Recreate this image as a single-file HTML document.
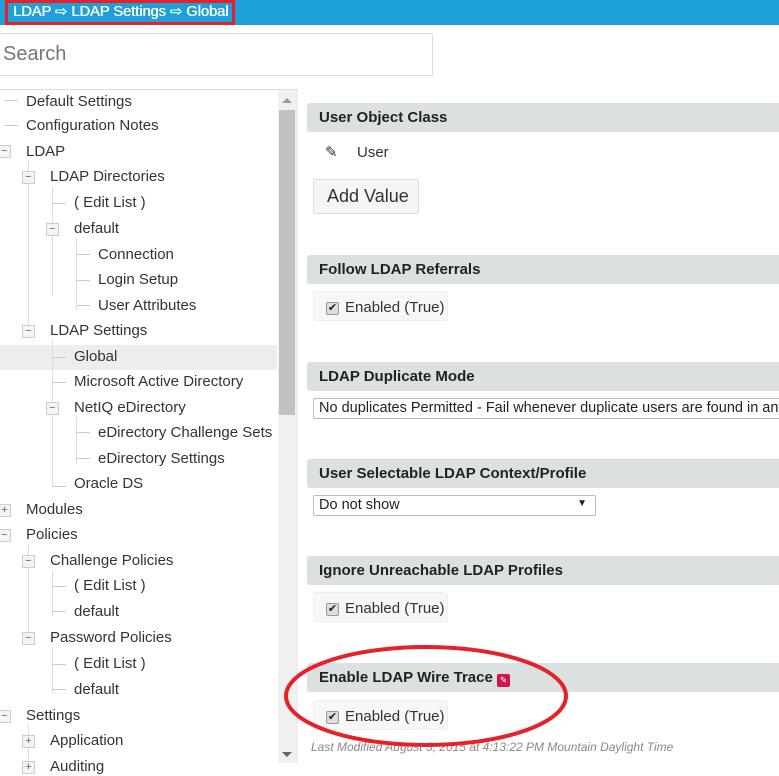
<!DOCTYPE html>
<html><head><meta charset="utf-8"><style>
*{margin:0;padding:0;box-sizing:border-box}
body{width:779px;height:763px;overflow:hidden;background:#fff;font-family:"Liberation Sans",Arial,sans-serif;color:#333;position:relative}
.a{position:absolute}
.t{position:absolute;font-size:15px;color:#333;white-space:nowrap;line-height:18px;margin-top:1px}
.tg{position:absolute;width:13px;height:13px;border:1px solid #ccc;background:#f4f4f4;font-size:11px;line-height:10px;text-align:center;color:#666}
.vl{position:absolute;border-left:1px solid #ddd}
.hd{position:absolute;left:307px;width:472px;height:29px;background:#dae1e0;border-radius:3px 0 0 3px;font-weight:bold;font-size:15px;color:#222;padding:6px 0 0 12px;line-height:18px}
.cb{position:absolute;left:313px;width:135px;height:30px;background:#f7f7f7;border:1px solid #eee;border-radius:3px;font-size:15px;color:#333;padding:7px 0 0 12px;line-height:18px}
.cb i{display:inline-block;width:13px;height:13px;border:1px solid #999;border-radius:2px;background:#ddd;margin-right:6px;vertical-align:1px;font-style:normal;font-size:11px;line-height:11px;text-align:center;color:#222}
</style></head><body>
<div class="a" style="left:0;top:0;width:779px;height:25px;background:#1d9fd8"></div>
<div class="a" style="left:5px;top:0;width:230px;height:25px;border:3px solid #e8202a;background:#1d9fd8"></div>
<div class="a" style="left:13px;top:3px;font-size:14.6px;color:#fff;white-space:nowrap;text-shadow:0.5px 0 0 #fff">LDAP ⇨ LDAP Settings ⇨ Global</div>
<div class="a" style="left:-2px;top:33px;width:435px;height:43px;border:1px solid #ddd;border-radius:2px"></div>
<div class="a" style="left:3px;top:43px;font-size:20px;color:#777">Search</div>
<div class="a" style="left:0;top:89px;width:298px;height:674px;border-top:1px solid #ddd"></div>
<div class="a" style="left:278px;top:90px;width:18px;height:673px;background:#f0f0f0"></div>
<div class="a" style="left:279px;top:110px;width:16px;height:305px;background:#c1c1c1"></div>
<div class="a" style="left:282px;top:98px;border:5px solid transparent;border-bottom:5px solid #999;border-top:0"></div>
<div class="a" style="left:282px;top:752px;border:5px solid transparent;border-top:5px solid #666;border-bottom:0"></div>
<div class="a" style="left:296px;top:90px;width:2px;height:673px;background:#eee"></div>
<div class="a" style="left:0;top:345px;width:277px;height:25px;background:#eceeee"></div>

<div class="vl" style="left:28px;top:160px;height:175px"></div>
<div class="vl" style="left:52px;top:186px;height:110px"></div>
<div class="vl" style="left:76px;top:238px;height:72px"></div>
<div class="vl" style="left:52px;top:340px;height:147px"></div>
<div class="vl" style="left:76px;top:417px;height:46px"></div>
<div class="vl" style="left:28px;top:544px;height:98px"></div>
<div class="vl" style="left:52px;top:570px;height:46px"></div>
<div class="vl" style="left:52px;top:647px;height:46px"></div>
<div class="vl" style="left:28px;top:725px;height:40px"></div>

<div class="a" style="left:4px;top:100px;width:14px;border-top:1px solid #ccc"></div>
<div class="t" style="left:26px;top:92px">Default Settings</div>
<div class="a" style="left:4px;top:125px;width:14px;border-top:1px solid #ccc"></div>
<div class="t" style="left:26px;top:116px">Configuration Notes</div>
<div class="tg" style="left:-2px;top:145px">−</div><div class="t" style="left:26px;top:142px">LDAP</div>
<div class="tg" style="left:22px;top:171px">−</div><div class="t" style="left:50px;top:167px">LDAP Directories</div>
<div class="a" style="left:52px;top:203px;width:14px;border-top:1px solid #ccc"></div><div class="t" style="left:74px;top:193px">( Edit List )</div>
<div class="tg" style="left:46px;top:223px">−</div><div class="t" style="left:74px;top:219px">default</div>
<div class="a" style="left:76px;top:254px;width:14px;border-top:1px solid #ccc"></div><div class="t" style="left:98px;top:245px">Connection</div>
<div class="a" style="left:76px;top:280px;width:14px;border-top:1px solid #ccc"></div><div class="t" style="left:98px;top:270px">Login Setup</div>
<div class="a" style="left:76px;top:305px;width:14px;border-top:1px solid #ccc"></div><div class="t" style="left:98px;top:296px">User Attributes</div>
<div class="tg" style="left:22px;top:325px">−</div><div class="t" style="left:50px;top:321px">LDAP Settings</div>
<div class="a" style="left:52px;top:357px;width:14px;border-top:1px solid #ccc"></div><div class="t" style="left:74px;top:347px">Global</div>
<div class="a" style="left:52px;top:382px;width:14px;border-top:1px solid #ccc"></div><div class="t" style="left:74px;top:372px">Microsoft Active Directory</div>
<div class="tg" style="left:46px;top:402px">−</div><div class="t" style="left:74px;top:398px">NetIQ eDirectory</div>
<div class="a" style="left:76px;top:432px;width:14px;border-top:1px solid #ccc"></div><div class="t" style="left:98px;top:423px">eDirectory Challenge Sets</div>
<div class="a" style="left:76px;top:458px;width:14px;border-top:1px solid #ccc"></div><div class="t" style="left:98px;top:449px">eDirectory Settings</div>
<div class="a" style="left:52px;top:486px;width:14px;border-top:1px solid #ccc"></div><div class="t" style="left:74px;top:474px">Oracle DS</div>
<div class="tg" style="left:-2px;top:504px">+</div><div class="t" style="left:26px;top:500px">Modules</div>
<div class="tg" style="left:-2px;top:529px">−</div><div class="t" style="left:26px;top:525px">Policies</div>
<div class="tg" style="left:22px;top:555px">−</div><div class="t" style="left:50px;top:551px">Challenge Policies</div>
<div class="a" style="left:52px;top:586px;width:14px;border-top:1px solid #ccc"></div><div class="t" style="left:74px;top:576px">( Edit List )</div>
<div class="a" style="left:52px;top:611px;width:14px;border-top:1px solid #ccc"></div><div class="t" style="left:74px;top:602px">default</div>
<div class="tg" style="left:22px;top:632px">−</div><div class="t" style="left:50px;top:628px">Password Policies</div>
<div class="a" style="left:52px;top:664px;width:14px;border-top:1px solid #ccc"></div><div class="t" style="left:74px;top:654px">( Edit List )</div>
<div class="a" style="left:52px;top:689px;width:14px;border-top:1px solid #ccc"></div><div class="t" style="left:74px;top:680px">default</div>
<div class="tg" style="left:-2px;top:710px">−</div><div class="t" style="left:26px;top:706px">Settings</div>
<div class="tg" style="left:22px;top:735px">+</div><div class="t" style="left:50px;top:731px">Application</div>
<div class="tg" style="left:22px;top:761px">+</div><div class="t" style="left:50px;top:757px">Auditing</div>

<div class="hd" style="top:103px">User Object Class</div>
<div class="a" style="left:325px;top:143px;font-size:15px;color:#333">✎</div>
<div class="a" style="left:357px;top:144px;font-size:15px;color:#333">User</div>
<div class="a" style="left:313px;top:179px;width:106px;height:35px;background:#f5f5f5;border:1px solid #ddd;border-radius:3px;font-size:18px;color:#333;padding:6px 0 0 13px">Add Value</div>
<div class="hd" style="top:255px">Follow LDAP Referrals</div>
<div class="cb" style="top:291px"><i>✔</i>Enabled (True)</div>
<div class="hd" style="top:362px">LDAP Duplicate Mode</div>
<div class="a" style="left:313px;top:398px;width:470px;height:21px;border:1px solid #bbb;border-radius:2px;background:#fff;font-size:14.5px;padding:1px 0 0 5px;white-space:nowrap;overflow:hidden;color:#222">No duplicates Permitted - Fail whenever duplicate users are found in any</div>
<div class="hd" style="top:459px">User Selectable LDAP Context/Profile</div>
<div class="a" style="left:313px;top:495px;width:283px;height:21px;border:1px solid #bbb;border-radius:2px;background:#fff;font-size:14.5px;padding:1px 0 0 5px;color:#222">Do not show<span style="position:absolute;right:8px;top:2px;font-size:10px">▼</span></div>
<div class="hd" style="top:556px">Ignore Unreachable LDAP Profiles</div>
<div class="cb" style="top:592px"><i>✔</i>Enabled (True)</div>
<div class="hd" style="top:663px">Enable LDAP Wire Trace <span style="display:inline-block;width:13px;height:13px;background:#d2154a;border-radius:2px;vertical-align:-1px;color:#fff;font-size:9px;line-height:13px;text-align:center;font-weight:normal">✎</span></div>
<div class="cb" style="top:700px"><i>✔</i>Enabled (True)</div>
<div class="a" style="left:311px;top:740px;font-size:12px;font-style:italic;color:#888;white-space:nowrap">Last Modified August 3, 2015 at 4:13:22 PM Mountain Daylight Time</div>
<svg class="a" style="left:280px;top:642px" width="296" height="110"><ellipse cx="146" cy="54" rx="140" ry="49" fill="none" stroke="#e8202a" stroke-width="4"/></svg>
</body></html>
